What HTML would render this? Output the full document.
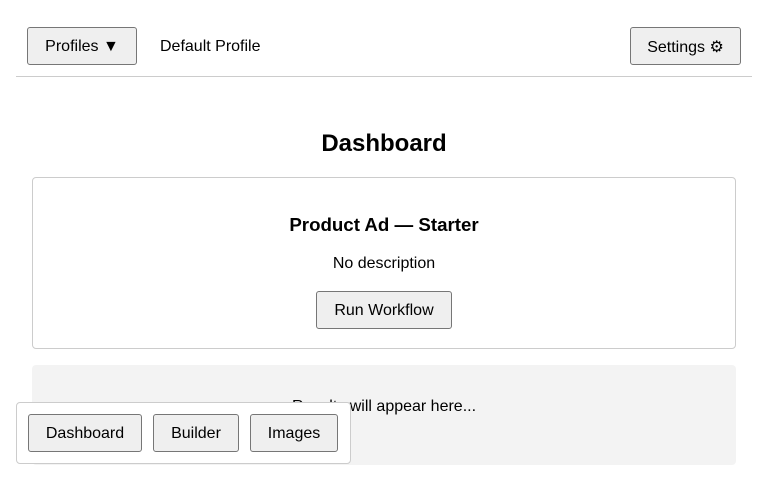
<!DOCTYPE html>
<html><head><style>
body{margin:0;width:768px;height:480px;position:relative;font-family:"Liberation Sans",sans-serif;font-size:16px;color:#000;background:#fff;overflow:hidden}
.b{position:absolute;box-sizing:border-box;background:#efefef;border:1px solid #767676;border-radius:3px;display:flex;align-items:center;justify-content:center;font-size:16px;padding-top:2px}
.t{position:absolute;white-space:nowrap}
</style></head><body>
<div class="b" style="left:27px;top:27px;width:110px;height:38px">Profiles ▼</div>
<div class="t" style="left:160px;top:38px">Default Profile</div>
<div class="b" style="left:630px;top:27px;width:111px;height:38px">Settings ⚙</div>
<div style="position:absolute;left:16px;top:76px;width:736px;height:1px;background:#ccc"></div>
<div class="t" style="left:0;width:768px;text-align:center;top:130px;font-size:24px;font-weight:bold">Dashboard</div>
<div style="position:absolute;left:32px;top:177px;width:704px;height:172px;box-sizing:border-box;border:1px solid #ccc;border-radius:4px"></div>
<div class="t" style="left:0;width:768px;text-align:center;top:214px;font-size:18.7px;font-weight:bold">Product Ad — Starter</div>
<div class="t" style="left:0;width:768px;text-align:center;top:255px">No description</div>
<div class="b" style="left:316px;top:291px;width:136px;height:38px">Run Workflow</div>
<div style="position:absolute;left:32px;top:365px;width:704px;height:100px;background:#f3f3f3;border-radius:4px"></div>
<div class="t" style="left:0;width:768px;text-align:center;top:398px">Results will appear here...</div>
<div style="position:absolute;left:16px;top:402px;width:335px;height:62px;box-sizing:border-box;background:#fff;border:1px solid #ccc;border-radius:4px"></div>
<div class="b" style="left:28px;top:414px;width:114px;height:38px">Dashboard</div>
<div class="b" style="left:153px;top:414px;width:86px;height:38px">Builder</div>
<div class="b" style="left:250px;top:414px;width:88px;height:38px">Images</div>
</body></html>
